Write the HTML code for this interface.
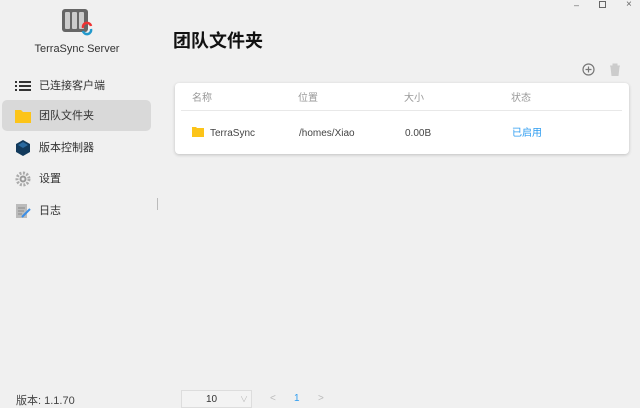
<!DOCTYPE html>
<html><head><meta charset="utf-8"><style>
*{margin:0;padding:0;box-sizing:border-box}
body{width:640px;height:405px;background:#f0f0f0;font-family:"Liberation Sans","Noto Sans CJK SC",sans-serif;position:relative;overflow:hidden;color:#333;line-height:1.2}
.a{position:absolute}
.nav{position:absolute;left:2px;width:149px;height:31px;font-size:11px;color:#333;display:flex;align-items:center;padding-left:13px;border-radius:5px;line-height:14px}
.nav span{margin-left:8px}
.sel{background:#d9d9d9}
.th{position:absolute;top:93px;font-size:10px;color:#999;line-height:12px}
.td{position:absolute;top:128px;font-size:10px;color:#444;line-height:12px}
</style></head><body>
<svg class="a" style="left:61px;top:9px" width="34" height="28" viewBox="0 0 34 28">
<rect x="1" y="0" width="26" height="23" rx="3" fill="#666"/>
<rect x="4" y="3" width="5" height="17" rx="1" fill="#ccc"/><rect x="11" y="3" width="5" height="17" rx="1" fill="#ccc"/><rect x="18" y="3" width="5" height="17" rx="1" fill="#ccc"/>
<path d="M22 19a4 4 0 0 1 8-2" stroke="#e33" stroke-width="2.5" fill="none"/><path d="M30 20a4 4 0 0 1-8 2" stroke="#29c" stroke-width="2.5" fill="none"/>
</svg>
<div class="a" style="left:0;width:154px;top:43px;text-align:center;font-size:11px;color:#333;line-height:13px">TerraSync Server</div>
<div class="nav" style="top:70px"><svg width="16" height="12"><g fill="#333"><rect x="0" y="1" width="2" height="2"/><rect x="4" y="1" width="12" height="2"/><rect x="0" y="5" width="2" height="2"/><rect x="4" y="5" width="12" height="2"/><rect x="0" y="9" width="2" height="2"/><rect x="4" y="9" width="12" height="2"/></g></svg><span>已连接客户端</span></div>
<div class="nav sel" style="top:100px"><svg width="16" height="14"><path d="M0 1h6l2 2h8v11H0z" fill="#fcc419"/></svg><span>团队文件夹</span></div>
<div class="nav" style="top:132px"><svg width="16" height="16"><path d="M8 0l7 4v8l-7 4-7-4V4z" fill="#123a5c"/><path d="M8 2l5 3-5 3-5-3z" fill="#2a6aa0"/></svg><span>版本控制器</span></div>
<div class="nav" style="top:163px"><svg width="16" height="16"><circle cx="8" cy="8" r="6" fill="none" stroke="#aaa" stroke-width="3" stroke-dasharray="2 1.5"/><circle cx="8" cy="8" r="3.5" fill="#999"/><circle cx="8" cy="8" r="1.5" fill="#eee"/></svg><span>设置</span></div>
<div class="nav" style="top:195px"><svg width="16" height="16"><rect x="1" y="1" width="11" height="14" fill="#bbb"/><path d="M3 5h7M3 8h6M3 11h4" stroke="#888"/><path d="M7 14l8-8" stroke="#3a8ee6" stroke-width="2"/></svg><span>日志</span></div>
<div class="a" style="left:157px;top:198px;width:1px;height:12px;background:#bbb"></div>
<div class="a" style="left:16px;top:395px;font-size:11px;color:#444;line-height:13px">版本: 1.1.70</div>
<div class="a" style="left:574px;top:0;font-size:9px;color:#666">–</div>
<div class="a" style="left:599px;top:1px;width:7px;height:7px;border:1px solid #666"></div>
<div class="a" style="left:626px;top:-1px;font-size:10px;color:#666">×</div>
<div class="a" style="left:173px;top:30px;font-size:18px;font-weight:bold;color:#111;line-height:22px">团队文件夹</div>
<svg class="a" style="left:582px;top:63px" width="13" height="13"><circle cx="6.5" cy="6.5" r="5.5" fill="none" stroke="#777" stroke-width="1.2"/><path d="M6.5 3.5v6M3.5 6.5h6" stroke="#777" stroke-width="1.2"/></svg>
<svg class="a" style="left:609px;top:63px" width="12" height="13"><path d="M1 3h10M4 3V1h4v2M2 4h8l-1 9H3z" fill="#ccc" stroke="#ccc"/></svg>
<div class="a" style="left:175px;top:83px;width:454px;height:71px;background:#fff;border-radius:4px;box-shadow:0 1px 3px rgba(0,0,0,.2)"></div>
<div class="a" style="left:181px;top:110px;width:441px;height:1px;background:#e8e8e8"></div>
<div class="th" style="left:192px">名称</div><div class="th" style="left:298px">位置</div><div class="th" style="left:404px">大小</div><div class="th" style="left:511px">状态</div>
<svg class="a" style="left:192px;top:127px" width="12" height="10"><path d="M0 0h4l1 1h7v9H0z" fill="#fcc419"/></svg>
<div class="td" style="left:210px">TerraSync</div><div class="td" style="left:299px">/homes/Xiao</div><div class="td" style="left:405px">0.00B</div><div class="td" style="left:512px;color:#2d9cf0">已启用</div>
<div class="a" style="left:181px;top:390px;width:71px;height:18px;border:1px solid #ddd;background:#f3f3f3;font-size:10px;padding:3px 0 0 24px;line-height:12px">10<span style="position:absolute;left:58px;color:#bbb;font-size:8px">∨</span></div>
<div class="a" style="left:270px;top:393px;font-size:10px;color:#bbb">&lt;</div>
<div class="a" style="left:294px;top:393px;font-size:10px;color:#2d9cf0">1</div>
<div class="a" style="left:318px;top:393px;font-size:10px;color:#bbb">&gt;</div>
</body></html>
